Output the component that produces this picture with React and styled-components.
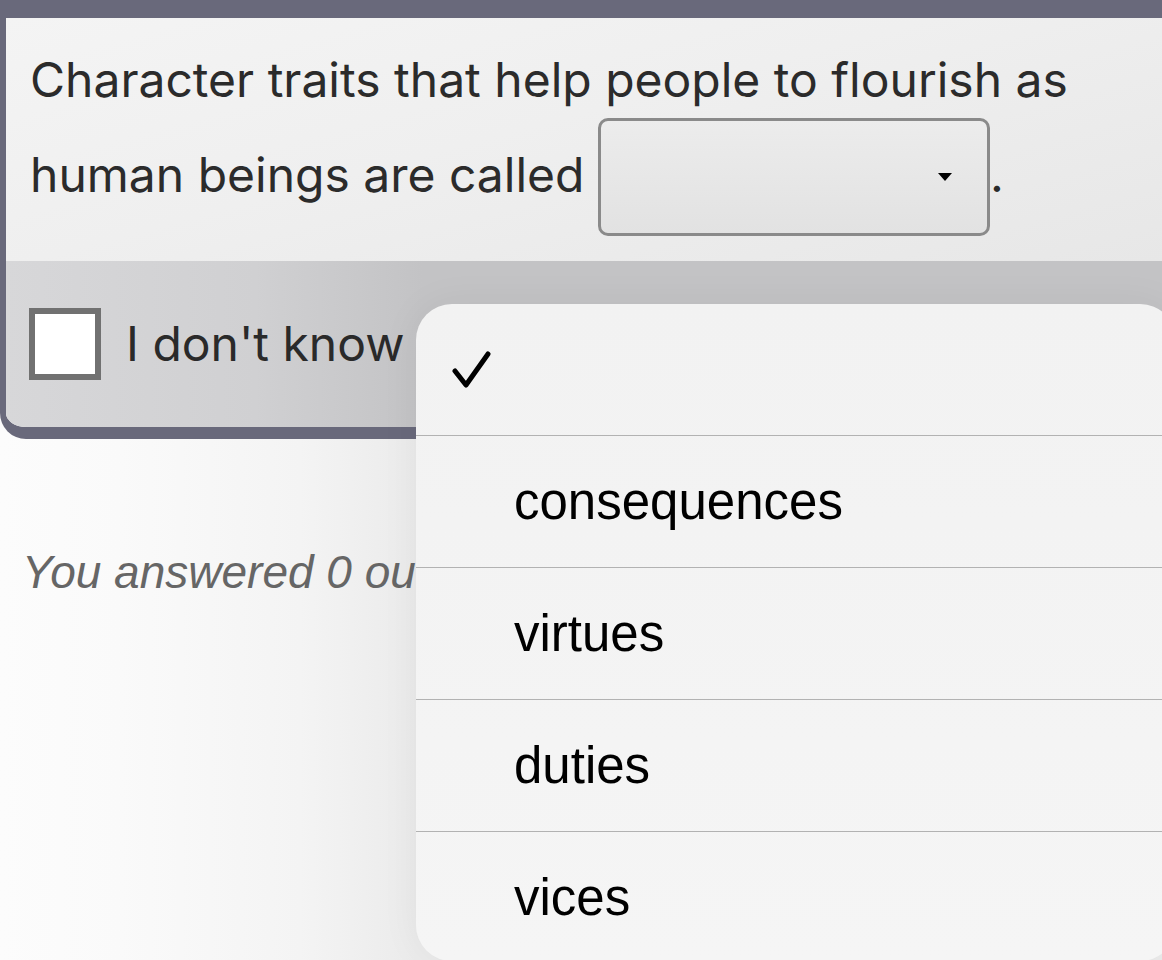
import React from 'react'
import styled, { createGlobalStyle } from 'styled-components'

const GlobalStyle = createGlobalStyle`
  html, body {
    margin: 0;
    padding: 0;
    background: #fbfbfb;
    overflow: hidden;
  }
  body {
    font-family: Inter, "Noto Sans", sans-serif;
  }
`

const options = ['', 'consequences', 'virtues', 'duties', 'vices']

function CheckMark() {
  return (
    <svg width='40' height='38' viewBox='0 0 40 38'>
      <path d='M4 20 L15 34 L37 3' fill='none' stroke='#000' strokeWidth='5' strokeLinecap='round' strokeLinejoin='round' />
    </svg>
  )
}

function App() {
  return (
    <Page>
      <GlobalStyle />
      <Card>
        <Question>
          Character traits that help people to flourish as human beings are called{' '}
          <SelectBox>
            <svg width='14' height='8' viewBox='0 0 14 8'>
              <path d='M0 0 H14 L7 8 Z' fill='#000' />
            </svg>
          </SelectBox>.
        </Question>
        <Footer>
          <CheckBox />
          <Label>I don't know</Label>
        </Footer>
      </Card>

      <Result>You answered 0 out of 1 questions correctly.</Result>

      <Popup>
        {options.map((opt, index) => (
          <Option key={index}>
            <CheckSlot>{index === 0 && <CheckMark />}</CheckSlot>
            <OptionText>{opt}</OptionText>
          </Option>
        ))}
      </Popup>
    </Page>
  )
}

export default App

const Page = styled.div`
  position: relative;
  width: 1162px;
  height: 960px;
  overflow: hidden;
  background: linear-gradient(90deg, #fcfcfc 0px, #fafafa 120px, #f4f4f4 300px, #ebebeb 416px, #ebebeb 100%);
`

const Card = styled.div`
  border: solid #69697b;
  border-width: 18px 0 12px 6px;
  border-bottom-left-radius: 26px;
  overflow: hidden;
`

const Question = styled.p`
  margin: 0;
  padding: 14px 24px 35px 24px;
  font-size: 48px;
  line-height: 95px;
  color: #2b2b2b;
  background: linear-gradient(165deg, #f4f4f4 0%, #efefef 45%, #e7e7e7 100%);
`

const SelectBox = styled.span`
  display: inline-flex;
  align-items: center;
  justify-content: flex-end;
  box-sizing: border-box;
  width: 392px;
  height: 118px;
  margin: -14px 0 -10px 0;
  padding-right: 35px;
  vertical-align: middle;
  border: 3px solid #8a8a8a;
  border-radius: 10px;
  background: linear-gradient(#ececec, #e2e2e2);
`

const Footer = styled.div`
  display: flex;
  align-items: center;
  gap: 25px;
  height: 166px;
  padding-left: 23px;
  background: linear-gradient(90deg, #d7d7d9 0px, #d0d0d2 250px, #c3c3c5 416px, #c3c3c5 100%);
`

const CheckBox = styled.span`
  box-sizing: border-box;
  width: 72px;
  height: 72px;
  border: 6px solid #717171;
  background: #fff;
`

const Label = styled.span`
  font-size: 48px;
  color: #2a2a2a;
`

const Result = styled.div`
  margin: 106px 0 0 22px;
  font-family: "Liberation Sans", Arial, sans-serif;
  font-style: italic;
  font-size: 46px;
  color: #666;
  white-space: nowrap;
`

const Popup = styled.div`
  position: absolute;
  left: 416px;
  top: 304px;
  width: 760px;
  height: 657px;
  border-radius: 36px;
  overflow: hidden;
  background: linear-gradient(#f2f2f2, #f5f5f5);
  box-shadow: 0 0 40px rgba(0, 0, 0, 0.05);
`

const Option = styled.div`
  display: flex;
  align-items: center;
  height: 131px;
  padding-left: 35px;
  border-bottom: 1px solid #b2b2b2;

  &:last-child {
    border-bottom: none;
  }
`

const CheckSlot = styled.span`
  display: flex;
  align-items: center;
  width: 63px;
  height: 40px;
`

const OptionText = styled.span`
  font-family: "Liberation Sans", Arial, sans-serif;
  font-size: 51px;
  color: #000;
`
